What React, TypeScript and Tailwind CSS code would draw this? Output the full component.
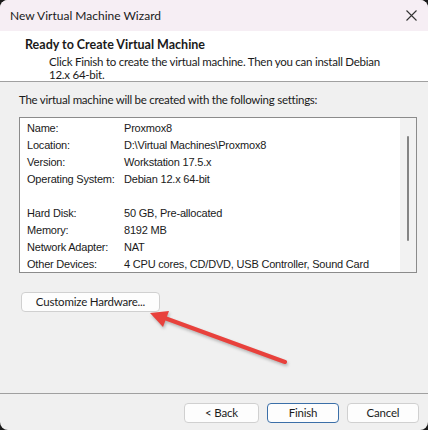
import React from "react";

const rows: [string, string][] = [
  ["Name:", "Proxmox8"],
  ["Location:", "D:\\Virtual Machines\\Proxmox8"],
  ["Version:", "Workstation 17.5.x"],
  ["Operating System:", "Debian 12.x 64-bit"],
  ["", ""],
  ["Hard Disk:", "50 GB, Pre-allocated"],
  ["Memory:", "8192 MB"],
  ["Network Adapter:", "NAT"],
  ["Other Devices:", "4 CPU cores, CD/DVD, USB Controller, Sound Card"],
];

const ui = { fontFamily: 'Lato, "Liberation Sans", sans-serif' };
const list = { fontFamily: '"Liberation Sans", Arial, sans-serif' };

const WinButton = ({ label, primary, className }: { label: string; primary?: boolean; className?: string }) => (
  <button
    className={
      "h-[20px] rounded-[4px] border bg-[#fdfdfd] text-[11.5px] tracking-[-0.2px] leading-none text-[#1b1b1b] " +
      (primary ? "border-[#3b6fa8] " : "border-[#d0d0d0] ") +
      (className ?? "")
    }
  >
    {label}
  </button>
);

export default function App() {
  return (
    <div className="w-[428px] h-[430px] bg-[#1a1a1a]" style={ui}>
      <div className="relative w-full h-full rounded-[8px] overflow-hidden bg-[#f0f0f0] flex flex-col">
        {/* title bar */}
        <div className="h-[31px] bg-[#f6eef4] flex items-center justify-between pl-[10px] pr-[11px]">
          <span className="text-[12px] text-[#1a1a1a]">New Virtual Machine Wizard</span>
          <svg width="11" height="11" viewBox="0 0 11 11">
            <path d="M0.5 0.5 L10.5 10.5 M10.5 0.5 L0.5 10.5" stroke="#333" strokeWidth="1.1" />
          </svg>
        </div>

        {/* header */}
        <div className="h-[51px] bg-white pl-[25px] pt-[6px] border-b border-[#a0a0a0]">
          <div className="text-[12.5px] leading-[16px] font-bold text-[#1a1a1a]">Ready to Create Virtual Machine</div>
          <div className="pl-[24px] mt-[2px] text-[11.5px] tracking-[-0.25px] leading-[13px] text-[#1a1a1a] whitespace-nowrap">
            Click Finish to create the virtual machine. Then you can install Debian
            <br />
            12.x 64-bit.
          </div>
        </div>

        {/* body */}
        <div className="flex-1 flex flex-col px-[19px] pt-[9px]">
          <div className="text-[11.5px] tracking-[-0.25px] leading-[17px] text-[#1a1a1a]">
            The virtual machine will be created with the following settings:
          </div>

          <div className="mt-[9px] w-[398px] h-[156px] border border-[#8b8b8b] bg-white flex" style={list}>
            <div className="flex-1 pt-[2px] pl-[7px]">
              {rows.map(([k, v], i) => (
                <div key={i} className="flex h-[17px] items-center text-[11px] tracking-[-0.2px] whitespace-nowrap text-[#1a1a1a]">
                  <span className="w-[97px] shrink-0">{k}</span>
                  <span>{v}</span>
                </div>
              ))}
            </div>
            <div className="w-[16px] bg-[#f2f2f2] flex justify-center pt-[18px]">
              <div className="w-[2px] h-[105px] bg-[#858585] rounded-full" />
            </div>
          </div>

          <div className="mt-[15px] pl-[2px]">
            <WinButton label="Customize Hardware..." className="w-[139px]" />
          </div>
        </div>

        {/* footer */}
        <div className="h-[37px] border-t border-[#a0a0a0] flex justify-end items-start gap-[8px] pt-[9px] pr-[9px]">
          <WinButton label="< Back" className="w-[75px]" />
          <WinButton label="Finish" primary className="w-[72px]" />
          <WinButton label="Cancel" className="w-[72px]" />
        </div>

        {/* annotation arrow */}
        <svg className="absolute inset-0 pointer-events-none" width="428" height="430" viewBox="0 0 428 430">
          <g style={{ filter: "drop-shadow(1px 2px 1.5px rgba(0,0,0,0.25))" }}>
            <line x1="285" y1="362" x2="162" y2="317" stroke="#e8413c" strokeWidth="4" strokeLinecap="round" />
            <polygon points="150,313 169,311 163,327" fill="#e8413c" />
          </g>
        </svg>
      </div>
    </div>
  );
}
